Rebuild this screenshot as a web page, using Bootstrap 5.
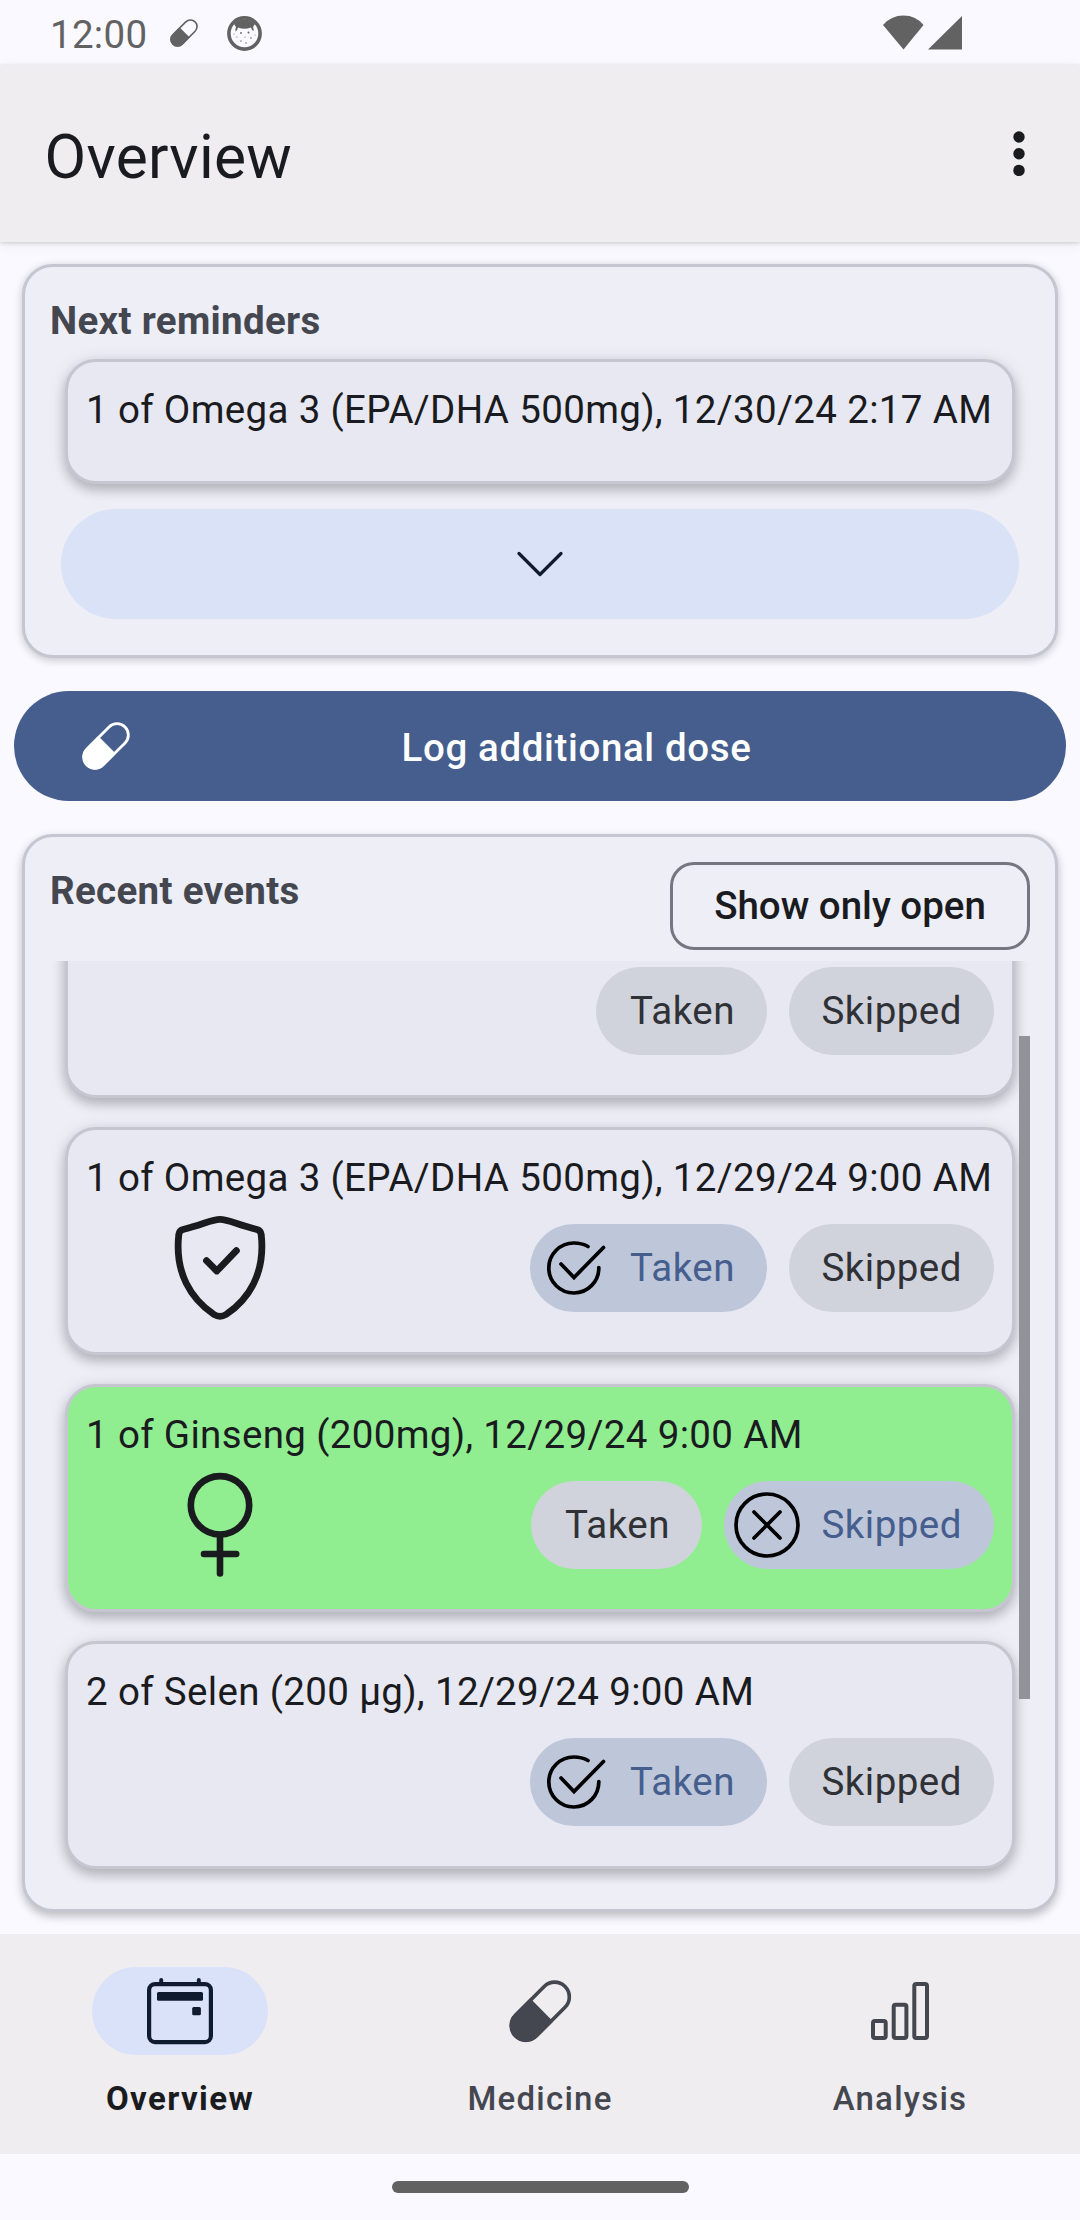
<!DOCTYPE html>
<html lang="en">
<head>
<meta charset="utf-8">
<meta name="viewport" content="width=device-width, initial-scale=1">
<title>Overview</title>
<link href="https://cdn.jsdelivr.net/npm/bootstrap@5.3.0/dist/css/bootstrap.min.css" rel="stylesheet">
<style>
body{width:1080px;height:2220px;background:#faf9ff;color:#1a1b20;font-family:Roboto,sans-serif;font-size:38.5px;line-height:45px;white-space:nowrap;overflow:hidden}
svg{display:block;flex:none;overflow:visible}
.statusbar{height:65px;padding:12px 118px 8px 50px;color:#626263}
.statusbar .clock{letter-spacing:.3px;width:120px}
.appbar{height:177px;background:#efedf0;box-shadow:0 1px 4px rgba(0,0,0,.16),0 3px 14px rgba(0,0,0,.06);padding:7px 55px 0 44.5px}
.appbar h1{font-size:60.5px;line-height:71px;letter-spacing:.3px;font-weight:400}
.appbar svg{margin-bottom:7px}
.content{height:1692px;padding:22px 14px 23px}
.panel{background:#edeef6;border:3px solid #c5c6d0;border-radius:31px;margin:0 8px;box-shadow:0 2px 8px rgba(0,0,0,.22)}
.next-panel{height:394px;padding:31px 36px 0 25px}
.section-title{font-size:38.5px;line-height:45px;font-weight:700;letter-spacing:.32px;color:#44474f}
.entry{background:#e7e8f1;border:3px solid #c5c6d0;border-radius:31px;padding:25px 18px 40px 18px;flex:none;letter-spacing:.35px;box-shadow:0 6px 12px rgba(0,0,0,.2),0 2px 18px rgba(0,0,0,.1)}
.entry.upcoming{height:125px;margin:16px 4px 0 15px}
.entry.event{height:228px}
.entry.green{background:#90ee90}
.expand{height:110px;margin:25px 0 0 11px;background:#dae2f7;border-radius:55px}
.log{height:110px;margin:33px 0;padding:0 66px 0 68px;border-radius:55px;background:#455e8e;color:#fff;font-weight:500;letter-spacing:.62px}
.log span{padding-top:3px;margin-left:23px}
.recent-panel{height:1078px;padding:0 25px 0 26px;box-shadow:0 4px 10px rgba(0,0,0,.26)}
.recent-head{height:124px;padding-top:25px}
.recent-head .section-title{margin:6px 0 0 -1px}
.toggle{width:360px;height:88px;border:3px solid #74777f;border-radius:24px;font-weight:500;padding-bottom:1px}
.viewport{height:923px;overflow:hidden;padding:0 15px 15px 14px;gap:29px;position:relative}
.thumb{position:absolute;right:0;top:75px;width:11px;height:663px;background:#90939a}
.actions{height:88px;gap:22px}
.kind{margin-left:79px}
.chip{height:88px;border-radius:44px;background:#d0d3db;color:#303136;letter-spacing:.5px;padding:0 32px 1px 10px}
.chip.taken{width:171px}
.chip.skipped{width:205px}
.chip.on{background:#bec6d9;color:#455e8e}
.chip.on.taken{width:237px;padding-left:11px}
.chip.on.skipped{width:270px}
.bottombar{height:220px;background:#efedf0;padding-top:33px;font-size:33px;line-height:39px;letter-spacing:1.25px;font-weight:500;color:#44474f}
.bottombar .pill{width:176px;height:88px;border-radius:44px;margin-bottom:24px}
.bottombar .current{font-weight:700;letter-spacing:1.4px;color:#1a1b1e}
.bottombar .current .pill{background:#dae2f9;color:#111b30}
.home{width:297px;height:12px;border-radius:6px;background:#626263;margin-top:27px}
</style>
</head>
<body class="d-flex flex-column">
<svg width="0" height="0" class="position-absolute">
  <defs>
    <symbol id="capsule" viewBox="-24 -24 48 48"><g transform="rotate(-45)"><rect x="-26.9" y="-11.3" width="53.8" height="22.6" rx="11.3" fill="none" stroke="currentColor" stroke-width="2.8"/><path d="M1.5-12.5H-15.6a12.5 12.5 0 0 0 0 25H1.5z" fill="currentColor"/></g></symbol>
    <symbol id="done" viewBox="0 0 66 66"><path d="M47 11.5C42.500 9 38 8 33 8a25 25 0 1 0 24.800 24.500M20 29 33 42.500 62.500 12.500" fill="none" stroke="#000" stroke-width="3.700" stroke-linecap="round"/></symbol>
  </defs>
</svg>

<div class="statusbar d-flex align-items-start">
  <span class="clock">12:00</span>
  <svg width="28" height="28" style="margin-top:7px"><use href="#capsule"/></svg>
  <svg width="35" height="35" viewBox="0 0 35 35" style="margin:4px 0 0 29px"><circle cx="17.500" cy="17.500" r="15.600" fill="#fbfaff" stroke="#626263" stroke-width="3.600"/><path d="M7 8C11 2 24 2 28 8L26 11Q27 13 26.500 15Q24.500 14 24 11.500Q17.500 14 11 11.500Q10.500 14.500 8.500 15.500Q8 13 9 11z" fill="#626263"/><g fill="#626263"><circle cx="14" cy="17" r=".9"/><circle cx="21.500" cy="16.500" r="1"/><circle cx="10" cy="21" r=".6"/><circle cx="18" cy="21" r=".6"/><circle cx="24" cy="22" r=".8"/><circle cx="14" cy="25" r=".7"/><circle cx="19" cy="27" r=".7"/><circle cx="28" cy="19" r=".5"/><circle cx="7" cy="18" r=".5"/></g></svg>
  <svg class="ms-auto" width="79" height="36" viewBox="0 0 79 36" style="margin-top:3px" fill="#626263"><path d="M0 10Q8 .5 20.500.5T40.500 10L20.500 34.500z"/><path d="M79 1V34.500H45z"/></svg>
</div>

<header class="appbar d-flex align-items-center justify-content-between position-relative">
  <h1 class="m-0">Overview</h1>
  <svg width="12" height="46" viewBox="0 0 12 46" fill="#1a1b1e"><circle cx="6" cy="6" r="5.700"/><circle cx="6" cy="22.700" r="5.700"/><circle cx="6" cy="39.400" r="5.700"/></svg>
</header>

<main class="content">
  <section class="panel next-panel">
    <h2 class="section-title m-0">Next reminders</h2>
    <div class="entry upcoming">1 of Omega 3 (EPA/DHA 500mg), 12/30/24 2:17 AM</div>
    <div class="expand d-flex align-items-center justify-content-center">
      <svg width="46" height="26" viewBox="0 0 46 26" fill="none" stroke="#111b30" stroke-width="3.200" stroke-linecap="round" stroke-linejoin="round"><path d="M2 2.500 23 23.500 44 2.500"/></svg>
    </div>
  </section>

  <div class="log d-flex align-items-center">
    <svg width="48" height="48"><use href="#capsule"/></svg>
    <span class="flex-grow-1 text-center">Log additional dose</span>
  </div>

  <section class="panel recent-panel">
    <div class="recent-head d-flex justify-content-between align-items-start">
      <h2 class="section-title">Recent events</h2>
      <div class="toggle d-flex align-items-center justify-content-center">Show only open</div>
    </div>
    <div class="viewport d-flex flex-column justify-content-end">
      <div class="entry event d-flex flex-column justify-content-end">
        <div class="actions d-flex align-items-center justify-content-end">
          <div class="chip taken d-flex align-items-center justify-content-end">Taken</div>
          <div class="chip skipped d-flex align-items-center justify-content-end">Skipped</div>
        </div>
      </div>
      <div class="entry event d-flex flex-column justify-content-between">
        <div>1 of Omega 3 (EPA/DHA 500mg), 12/29/24 9:00 AM</div>
        <div class="actions d-flex align-items-center">
          <svg class="kind me-auto" width="110" height="110" viewBox="0 0 110 110" fill="none" stroke="#1a1b1e" stroke-width="6.800" stroke-linecap="round" stroke-linejoin="round"><path d="M55 6.400C47 6.400 38 11.500 18 16.500Q14.300 17.500 13.800 21.500C9.500 60 26 86 49 101.500Q55 105.300 61 101.500C84 86 100.500 60 96.200 21.500Q95.700 17.500 92 16.500C72 11.500 63 6.400 55 6.400z"/><path d="M41.500 47.700 51.800 58 71.400 37.700"/></svg>
          <div class="chip taken on d-flex align-items-center justify-content-between"><svg width="66" height="66"><use href="#done"/></svg>Taken</div>
          <div class="chip skipped d-flex align-items-center justify-content-end">Skipped</div>
        </div>
      </div>
      <div class="entry event green d-flex flex-column justify-content-between">
        <div>1 of Ginseng (200mg), 12/29/24 9:00 AM</div>
        <div class="actions d-flex align-items-center">
          <svg class="kind me-auto" width="110" height="110" viewBox="0 0 110 110" fill="none" stroke="#1a1b1e" stroke-width="6.600" stroke-linecap="round"><circle cx="55" cy="35.300" r="29.200"/><path d="M55 65V103.500M39 84H71.200"/></svg>
          <div class="chip taken d-flex align-items-center justify-content-end">Taken</div>
          <div class="chip skipped on d-flex align-items-center justify-content-between"><svg width="66" height="66" viewBox="0 0 66 66" fill="none" stroke="#000" stroke-width="3.700" stroke-linecap="round"><circle cx="33" cy="33" r="31"/><path d="M20 20 46 46M46 20 20 46"/></svg>Skipped</div>
        </div>
      </div>
      <div class="entry event d-flex flex-column justify-content-between">
        <div>2 of Selen (200 µg), 12/29/24 9:00 AM</div>
        <div class="actions d-flex align-items-center justify-content-end">
          <div class="chip taken on d-flex align-items-center justify-content-between"><svg width="66" height="66"><use href="#done"/></svg>Taken</div>
          <div class="chip skipped d-flex align-items-center justify-content-end">Skipped</div>
        </div>
      </div>
      <div class="thumb"></div>
    </div>
  </section>
</main>

<nav class="bottombar d-flex text-center">
  <div class="col-4 current d-flex flex-column align-items-center">
    <div class="pill d-flex align-items-center justify-content-center">
      <svg width="72" height="72" viewBox="0 0 72 72"><rect x="5.100" y="9.100" width="61.800" height="58" rx="6" fill="none" stroke="currentColor" stroke-width="4.200"/><path d="M17.200 8V5M54.800 8V5" stroke="currentColor" stroke-width="4" stroke-linecap="round"/><rect x="13" y="17" width="46" height="8.700" rx="1.500" fill="currentColor"/><rect x="48.200" y="32" width="8.700" height="8.300" rx="1.500" fill="currentColor"/></svg>
    </div>
    <div>Overview</div>
  </div>
  <div class="col-4 d-flex flex-column align-items-center">
    <div class="pill d-flex align-items-center justify-content-center"><svg width="62.500" height="62.500"><use href="#capsule"/></svg></div>
    <div>Medicine</div>
  </div>
  <div class="col-4 d-flex flex-column align-items-center">
    <div class="pill d-flex align-items-center justify-content-center">
      <svg width="72" height="72" viewBox="0 0 72 72" fill="none" stroke="currentColor" stroke-width="4"><rect x="9" y="46" width="12.700" height="17" rx="2"/><rect x="29.700" y="29.700" width="12.700" height="33.300" rx="2"/><rect x="50.300" y="9" width="12.700" height="54" rx="2"/></svg>
    </div>
    <div>Analysis</div>
  </div>
</nav>
<div class="home mx-auto"></div>
<script src="https://cdn.jsdelivr.net/npm/bootstrap@5.3.0/dist/js/bootstrap.bundle.min.js"></script>
</body>
</html>
